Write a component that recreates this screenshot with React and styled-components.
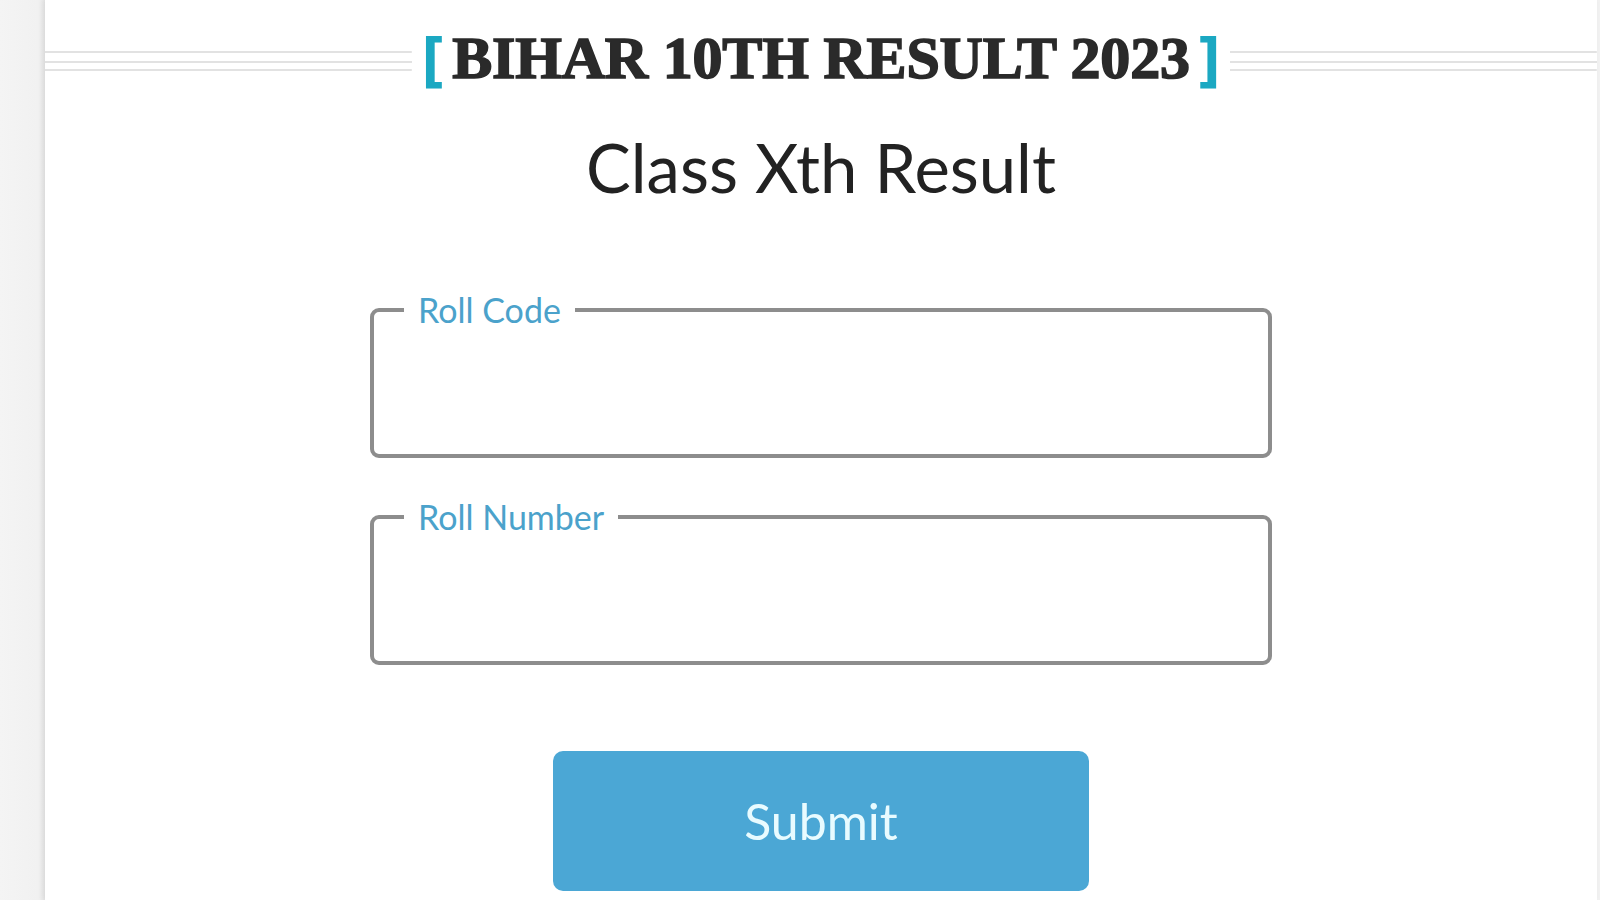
import React from "react";
import styled, { createGlobalStyle } from "styled-components";

const GlobalStyle = createGlobalStyle`
  html, body {
    margin: 0;
    padding: 0;
    background: #f2f2f2;
  }
  * { box-sizing: border-box; }
`;

const Shell = styled.div`
  display: flex;
  min-height: 100vh;
  padding: 0 3px 0 45px;
  background: linear-gradient(90deg, #f4f4f4 0, #f1f1f1 38px, #e6e6e6 45px, #f1f1f1 45px);
`;

const Panel = styled.main`
  flex: 1;
  background: #ffffff;
  box-shadow: -2px 0 5px rgba(0, 0, 0, 0.06);
  display: flex;
  flex-direction: column;
  align-items: center;
  padding-top: 22px;
`;

const HeadingRow = styled.div`
  width: 100%;
  display: flex;
  align-items: center;
  gap: 10px;
`;

const Rule = styled.div`
  flex: 1;
  height: 20px;
  margin-top: 6px;
  background:
    linear-gradient(#e2e2e2, #e2e2e2) top / 100% 2px no-repeat,
    linear-gradient(#e2e2e2, #e2e2e2) 0 10px / 100% 2px no-repeat,
    linear-gradient(#e2e2e2, #e2e2e2) bottom / 100% 2px no-repeat;
`;

const Heading = styled.h1`
  margin: 0;
  display: flex;
  align-items: center;
  gap: 7px;
  font-family: "Liberation Serif", "Times New Roman", serif;
  font-weight: 700;
  font-size: 60px;
  line-height: 1.2;
  letter-spacing: -0.2px;
  color: #2a2a2a;
  -webkit-text-stroke: 1.6px #2a2a2a;
  white-space: nowrap;
`;

const Bracket = styled.span`
  color: #1ba8c2;
  -webkit-text-stroke: 0;
  font-family: "DejaVu Sans Condensed", "DejaVu Sans", sans-serif;
  font-weight: 700;
  font-size: 58px;
  line-height: 1;
  transform: translateY(3px);
`;

const Title = styled.h2`
  margin: 33px 0 0;
  font-family: Lato, "Open Sans", sans-serif;
  font-weight: 400;
  font-size: 67px;
  line-height: 1.2;
  color: #222222;
`;

const Form = styled.form`
  width: 902px;
  margin-top: 86px;
  display: flex;
  flex-direction: column;
  gap: 42px;
`;

const Field = styled.fieldset`
  margin: 0;
  padding: 0;
  border: 4px solid #8d8d8d;
  border-radius: 9px;
  min-width: 0;
`;

const Legend = styled.legend`
  margin-left: 30px;
  padding: 0 14px;
  font-family: Lato, "Open Sans", sans-serif;
  font-size: 34px;
  line-height: 34px;
  color: #4ba2cb;
`;

const Input = styled.input`
  display: block;
  width: 100%;
  height: 127px;
  border: 0;
  outline: none;
  background: transparent;
  padding: 0 30px;
  font-family: Lato, "Open Sans", sans-serif;
  font-size: 30px;
  color: #222;
`;

const SubmitButton = styled.button`
  margin: 44px auto 0;
  width: 536px;
  height: 140px;
  border: 0;
  border-radius: 10px;
  background: #4ba7d5;
  color: #e8fbff;
  font-family: Lato, "Open Sans", sans-serif;
  font-size: 50px;
  cursor: pointer;
`;

export default function App() {
  return (
    <>
      <GlobalStyle />
      <Shell>
        <Panel>
          <HeadingRow>
            <Rule />
            <Heading>
              <Bracket>[</Bracket>
              <span>BIHAR 10TH RESULT 2023</span>
              <Bracket>]</Bracket>
            </Heading>
            <Rule />
          </HeadingRow>
          <Title>Class Xth Result</Title>
          <Form onSubmit={(e) => e.preventDefault()}>
            <Field>
              <Legend>Roll Code</Legend>
              <Input type="text" name="rollCode" />
            </Field>
            <Field>
              <Legend>Roll Number</Legend>
              <Input type="text" name="rollNumber" />
            </Field>
            <SubmitButton type="submit">Submit</SubmitButton>
          </Form>
        </Panel>
      </Shell>
    </>
  );
}
